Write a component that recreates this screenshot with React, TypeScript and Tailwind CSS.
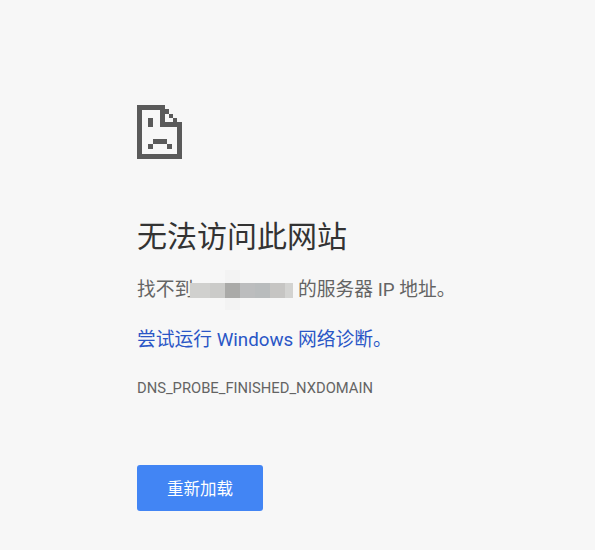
const redactBlocks = [
  { w: 'w-[20px]', bg: 'bg-[#d0d0ce]' },
  { w: 'w-[15px]', bg: 'bg-[#cbcbc9]' },
  { w: 'w-[15px]', bg: 'bg-[#aaaaa8]' },
  { w: 'w-[15px]', bg: 'bg-[#bcbdbe]' },
  { w: 'w-[15px]', bg: 'bg-[#b9bcbd]' },
  { w: 'w-[15px]', bg: 'bg-[#c6c5c3]' },
  { w: 'w-[8px]', bg: 'bg-[#d3d3d1]' },
];

function SadFile() {
  return (
    <svg width="45" height="54" viewBox="0 0 45 54" shapeRendering="crispEdges" className="block">
      <g fill="#5a5a5a">
        <rect x="0" y="0" width="28" height="5" />
        <rect x="0" y="0" width="5" height="54" />
        <rect x="0" y="49" width="45" height="5" />
        <rect x="40" y="22" width="5" height="32" />
        <rect x="23" y="0" width="5" height="22" />
        <rect x="23" y="17" width="22" height="5" />
        <rect x="28" y="4" width="4" height="5" />
        <rect x="32" y="9" width="4" height="4" />
        <rect x="36" y="13" width="4" height="4" />
        <rect x="11" y="13" width="5" height="9" />
        <rect x="11" y="39" width="5" height="5" />
        <rect x="16" y="34" width="14" height="5" />
        <rect x="30" y="39" width="5" height="5" />
      </g>
    </svg>
  );
}

export default function App() {
  return (
    <div className="h-[550px] w-[595px] overflow-hidden bg-[#f7f7f7] pl-[137px] pt-[105px] font-['Roboto','Noto_Sans_CJK_SC',sans-serif]">
      <SadFile />

      {/* heading */}
      <h1 className="mt-[58px] text-[30px] leading-[40px] font-normal text-[#333333] whitespace-nowrap">无法访问此网站</h1>

      <p className="relative mt-[20px] flex items-center text-[18.75px] leading-[26px] text-[#646464] whitespace-nowrap">
        <span className="w-[53px]">找不到</span>
        <span className="relative flex h-[15px] overflow-visible rounded-[3px]">
          {/* faint smear left by the blur */}
          <span className="absolute left-[35px] top-[-13px] h-[40px] w-[15px] bg-[#f3f3f3]" />
          {redactBlocks.map((b, i) => (
            <span key={i} className={`relative ${b.w} ${b.bg} h-full`} />
          ))}
        </span>
        <span className="ml-[5px]">的服务器 IP 地址。</span>
      </p>

      <p className="mt-[24px] text-[18.75px] leading-[26px] text-[#2a56c6] whitespace-nowrap">尝试运行 Windows 网络诊断。</p>

      <p className="mt-[25px] text-[14.75px] leading-[20px] text-[#646464] whitespace-nowrap">DNS_PROBE_FINISHED_NXDOMAIN</p>

      <button className="mt-[67px] flex h-[46px] w-[126px] items-center justify-center rounded-[3px] bg-[#4285f4] pt-[5px] text-[16.5px] text-white">
        重新加载
      </button>
    </div>
  );
}
